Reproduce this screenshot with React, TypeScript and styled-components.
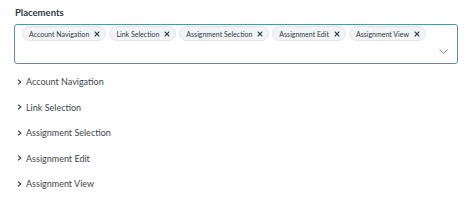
import React from "react";
import styled, { createGlobalStyle } from "styled-components";

const Global = createGlobalStyle`
  html, body { margin: 0; padding: 0; background: #fff; }
  body { font-family: Lato, "Noto Sans", sans-serif; color: #2d3b45; }
`;

const Page = styled.div`
  padding: 7px 16px 0 14px;
  width: 444px;
`;

const Label = styled.div`
  font-size: 9.5px;
  font-weight: 700;
  color: #2d3b45;
  line-height: 12px;
  margin-bottom: 5px;
  padding-left: 1px;
`;

const Box = styled.div`
  box-sizing: border-box;
  height: 40px;
  border: 1.5px solid #5a8fa8;
  border-radius: 3px;
  padding: 1px 30px 0 7px;
  position: relative;
`;

const Tags = styled.div`
  display: flex;
  gap: 3px;
`;

const Tag = styled.div`
  display: flex;
  align-items: center;
  height: 15px;
  box-sizing: border-box;
  border: 1px solid #e1e4e6;
  background: #f3f4f5;
  border-radius: 8px;
  padding: 0 5px 0 6px;
  font-size: 7px;
  color: #2d3b45;
  white-space: nowrap;
`;

const X = styled.svg`
  margin-left: 5px;
  width: 6px;
  height: 6px;
`;

const Caret = styled.svg`
  position: absolute;
  right: 9px;
  bottom: 9px;
  width: 9px;
  height: 5px;
`;

const List = styled.div`
  margin-top: 5px;
  display: flex;
  flex-direction: column;
`;

const Row = styled.div`
  display: flex;
  align-items: center;
  height: 25.5px;
  font-size: 9px;
  color: #3d464d;
  padding-left: 3px;
`;

const Chev = styled.svg`
  width: 5px;
  height: 6px;
  margin-right: 4px;
`;

const items = [
  "Account Navigation",
  "Link Selection",
  "Assignment Selection",
  "Assignment Edit",
  "Assignment View",
];

export default function App() {
  return (
    <>
      <Global />
      <Page>
        <Label>Placements</Label>
        <Box>
          <Tags>
            {items.map((t) => (
              <Tag key={t}>
                {t}
                <X viewBox="0 0 6 6">
                  <path d="M0.7 0.7L5.3 5.3M5.3 0.7L0.7 5.3" stroke="#2d3b45" strokeWidth="1.2" />
                </X>
              </Tag>
            ))}
          </Tags>
          <Caret viewBox="0 0 9 5">
            <path d="M0.5 0.5L4.5 4.5L8.5 0.5" stroke="#73818c" strokeWidth="0.9" fill="none" />
          </Caret>
        </Box>
        <List>
          {items.map((t) => (
            <Row key={t}>
              <Chev viewBox="0 0 5 6">
                <path d="M1 0.6L3.8 3L1 5.4" stroke="#2d3b45" strokeWidth="1.1" fill="none" />
              </Chev>
              {t}
            </Row>
          ))}
        </List>
      </Page>
    </>
  );
}
